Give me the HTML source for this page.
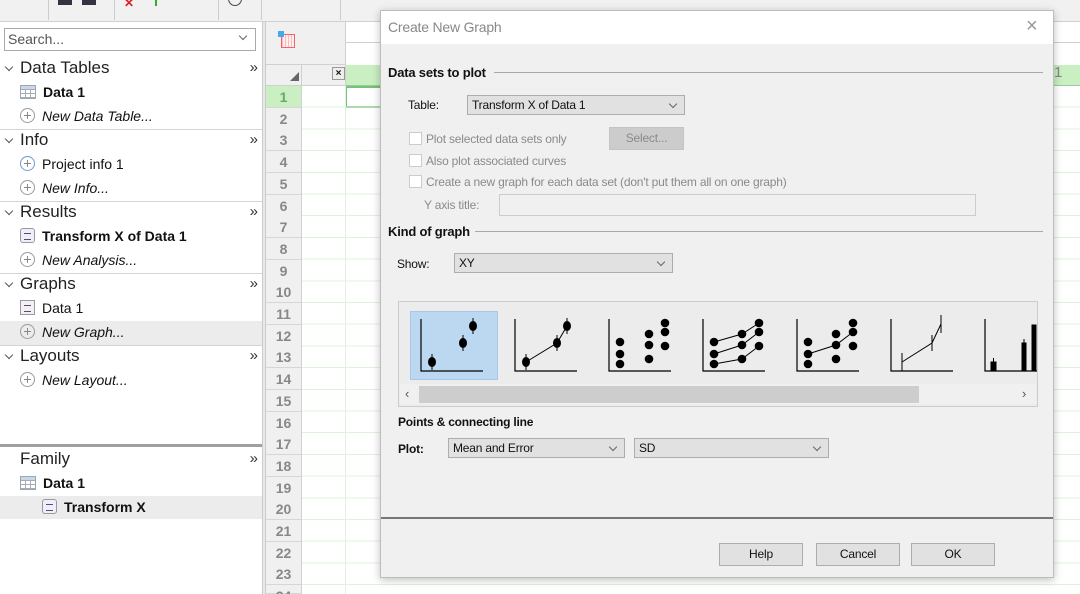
<!DOCTYPE html>
<html><head><meta charset="utf-8"><style>
*{margin:0;padding:0;box-sizing:border-box}
html,body{width:1080px;height:594px;overflow:hidden}
body{position:relative;background:#fff;font-family:"Liberation Sans",sans-serif;color:#111}
.a{position:absolute}
.sec{position:absolute;left:0;width:262px;font-size:17px;color:#222;height:22px}
.sec .ch{position:absolute;left:6px;top:5px;width:6px;height:6px;border-right:1.3px solid #555;border-bottom:1.3px solid #555;transform:rotate(45deg)}
.sec .t{position:absolute;left:20px;top:-1px}
.sec .r{position:absolute;right:4px;top:0;font-size:15px;color:#333}
.it{position:absolute;left:20px;font-size:14px;white-space:nowrap}
.plus{display:inline-block;width:15px;height:15px;border:1px solid #999;border-radius:50%;position:relative;vertical-align:-2px;margin-right:7px}
.plus:before{content:"";position:absolute;left:3px;top:6px;width:7px;height:1px;background:#888}
.plus:after{content:"";position:absolute;left:6px;top:3px;width:1px;height:7px;background:#888}
.tbl{display:inline-block;width:16px;height:14px;border:1px solid #9aa;vertical-align:-2px;margin-right:7px;background:linear-gradient(#c9d7e8 0 3px,transparent 3px),repeating-linear-gradient(90deg,transparent 0 4px,#aab 4px 5px),repeating-linear-gradient(transparent 0 3px,#aab 3px 4px)}
.res{display:inline-block;width:15px;height:15px;border:1px solid #999;border-radius:3px;background:#eef;vertical-align:-2px;margin-right:7px;position:relative}
.res:before{content:"";position:absolute;left:3px;top:4px;width:7px;height:5px;border-top:1px solid #555;border-bottom:1px solid #555}
.hl{position:absolute;left:0;width:262px;background:#ececec}
.sep{position:absolute;left:0;width:262px;height:1px;background:#d4d4d4}
.rn{position:absolute;left:266px;width:36px;height:22px;text-align:center;font-size:14px;font-weight:bold;color:#888;background:#f0f0f0;border-bottom:1px solid #d6d6d6;border-right:1px solid #d0d0d0;line-height:22px}
.dlg{position:absolute;left:380px;top:10px;width:674px;height:568px;background:#f0f0f0;border:1px solid #bdbdbd;box-shadow:0 2px 8px rgba(0,0,0,.25);font-size:12px;letter-spacing:-.2px}
.dlg .a{white-space:nowrap}
.sel{position:absolute;background:#e1e1e1;border:1px solid #adadad;height:20px;padding:2px 4px;font-size:12px}
.sel:after{content:"";position:absolute;right:8px;top:5px;width:5px;height:5px;border-right:1px solid #666;border-bottom:1px solid #666;transform:rotate(45deg)}
.cb{position:absolute;width:13px;height:13px;background:#fff;border:1px solid #ccc}
.gray{color:#8a8a8a}
.btn{position:absolute;top:532px;width:84px;height:23px;background:#e1e1e1;border:1px solid #adadad;text-align:center;line-height:21px}
.h{font-weight:bold}
.line{position:absolute;height:1px;background:#a8a8a8}
</style></head><body>

<div class="a" style="left:0;top:0;width:1080px;height:22px;background:#f1f1f1;border-bottom:1px solid #d0d0d0"></div>
<div class="a" style="left:58px;top:0;width:14px;height:5px;background:#334"></div>
<div class="a" style="left:82px;top:0;width:14px;height:5px;background:#334"></div>
<div class="a" style="left:124px;top:0;color:#d22;font-weight:bold;font-size:12px;line-height:6px">✕</div>
<div class="a" style="left:155px;top:0;width:2px;height:6px;background:#3a3"></div>
<div class="a" style="left:48px;top:0;width:1px;height:20px;background:#ccc"></div>
<div class="a" style="left:114px;top:0;width:1px;height:20px;background:#ccc"></div>
<div class="a" style="left:218px;top:0;width:1px;height:20px;background:#ccc"></div>
<div class="a" style="left:261px;top:0;width:1px;height:20px;background:#ccc"></div>
<div class="a" style="left:228px;top:-8px;width:14px;height:14px;border:1.5px solid #444;border-radius:50%"></div>
<div class="a" style="left:340px;top:0;width:1px;height:20px;background:#ccc"></div>

<div class="a" style="left:0;top:22px;width:262px;height:572px;background:#fff"></div>
<div class="a" style="left:4px;top:28px;width:252px;height:23px;border:1px solid #aaa;background:#fff;font-size:14px;color:#555;padding:2px 3px">Search...</div>
<div class="a" style="left:240px;top:33px;width:6px;height:6px;border-right:1px solid #666;border-bottom:1px solid #666;transform:rotate(45deg)"></div>

<div class="hl" style="top:321px;height:24px"></div>
<div class="hl" style="top:496px;height:23px"></div>

<div class="sec" style="top:59px"><span class="ch"></span><span class="t">Data Tables</span><span class="r">»</span></div>
<div class="it" style="top:84px"><span class="tbl"></span><b>Data 1</b></div>
<div class="it" style="top:108px"><span class="plus"></span><i>New Data Table...</i></div>
<div class="sep" style="top:129px"></div>
<div class="sec" style="top:131px"><span class="ch"></span><span class="t">Info</span><span class="r">»</span></div>
<div class="it" style="top:156px"><span class="plus" style="border-color:#6a9ad4"></span>Project info 1</div>
<div class="it" style="top:180px"><span class="plus"></span><i>New Info...</i></div>
<div class="sep" style="top:201px"></div>
<div class="sec" style="top:203px"><span class="ch"></span><span class="t">Results</span><span class="r">»</span></div>
<div class="it" style="top:228px"><span class="res"></span><b>Transform X of Data 1</b></div>
<div class="it" style="top:252px"><span class="plus"></span><i>New Analysis...</i></div>
<div class="sep" style="top:273px"></div>
<div class="sec" style="top:275px"><span class="ch"></span><span class="t">Graphs</span><span class="r">»</span></div>
<div class="it" style="top:300px"><span class="res" style="background:#f4eefa;border-radius:0"></span>Data 1</div>
<div class="it" style="top:324px"><span class="plus"></span><i>New Graph...</i></div>
<div class="sep" style="top:345px"></div>
<div class="sec" style="top:347px"><span class="ch"></span><span class="t">Layouts</span><span class="r">»</span></div>
<div class="it" style="top:372px"><span class="plus"></span><i>New Layout...</i></div>

<div class="a" style="left:0;top:444px;width:262px;height:3px;background:#a0a0a0"></div>
<div class="sec" style="top:450px"><span class="t">Family</span><span class="r">»</span></div>
<div class="it" style="top:475px"><span class="tbl"></span><b>Data 1</b></div>
<div class="it" style="top:499px;left:42px"><span class="res"></span><b>Transform X</b></div>

<div class="a" style="left:262px;top:22px;width:4px;height:572px;background:#e8e8e8;border-left:1px solid #ccc;border-right:1px solid #ccc"></div>

<div class="a" style="left:266px;top:22px;width:80px;height:43px;background:#f0f0f0;border-right:1px solid #d0d0d0;border-bottom:1px solid #d0d0d0"></div>
<div class="a" style="left:281px;top:34px;width:14px;height:14px;border:1px solid #e66;background:repeating-linear-gradient(90deg,#fbb 0 1px,#fee 1px 3px)"></div>
<div class="a" style="left:278px;top:31px;width:6px;height:6px;background:#4ae"></div>
<div class="a" style="left:346px;top:42px;width:734px;height:1px;background:#d0d0d0"></div>
<div class="a" style="left:266px;top:65px;width:36px;height:21px;background:#f0f0f0;border-right:1px solid #d0d0d0;border-bottom:1px solid #d0d0d0"></div>
<div class="a" style="left:290px;top:72px;width:0;height:0;border-left:9px solid transparent;border-bottom:9px solid #666"></div>
<div class="a" style="left:302px;top:65px;width:44px;height:21px;background:#f0f0f0;border-right:1px solid #d0d0d0;border-bottom:1px solid #d0d0d0"></div>
<div class="a" style="left:332px;top:67px;width:13px;height:13px;border:1px solid #999;background:#eee;font-size:10px;font-weight:bold;text-align:center;line-height:11px">×</div>
<div class="a" style="left:346px;top:65px;width:734px;height:21px;background:#c9efc2;border-bottom:1px solid #9c9"></div>
<div class="a" style="left:1054px;top:64px;font-size:15px;color:#888">1</div>
<div class="a" style="left:345px;top:86px;width:40px;height:22px;border:2px solid #79c079"></div>
<div class="a" style="left:302px;top:86px;width:778px;height:508px;background:repeating-linear-gradient(transparent 0 20.7px,#dff3dc 20.7px 21.7px),linear-gradient(90deg,transparent 0 43px,#dff3dc 43px 44px,transparent 44px)"></div>
<div class="rn" style="top:86px;background:#c9efc2;color:#6a6">1</div>
<div class="rn" style="top:107.7px">2</div><div class="rn" style="top:129.4px">3</div><div class="rn" style="top:151.1px">4</div><div class="rn" style="top:172.8px">5</div><div class="rn" style="top:194.5px">6</div><div class="rn" style="top:216.2px">7</div><div class="rn" style="top:237.9px">8</div><div class="rn" style="top:259.6px">9</div><div class="rn" style="top:281.3px">10</div><div class="rn" style="top:303px">11</div><div class="rn" style="top:324.7px">12</div><div class="rn" style="top:346.4px">13</div><div class="rn" style="top:368.1px">14</div><div class="rn" style="top:389.8px">15</div><div class="rn" style="top:411.5px">16</div><div class="rn" style="top:433.2px">17</div><div class="rn" style="top:454.9px">18</div><div class="rn" style="top:476.6px">19</div><div class="rn" style="top:498.3px">20</div><div class="rn" style="top:520px">21</div><div class="rn" style="top:541.7px">22</div><div class="rn" style="top:563.4px">23</div><div class="rn" style="top:585.1px;height:9px">24</div>

<div class="dlg">
 <div class="a" style="left:0;top:0;width:672px;height:33px;background:#fff"></div>
 <div class="a" style="left:7px;top:8px;font-size:14px;color:#888">Create New Graph</div>
 <div class="a" style="left:645px;top:4px;font-size:20px;color:#999;font-weight:lighter">×</div>

 <div class="a h" style="left:7px;top:54px;font-size:13px">Data sets to plot</div>
 <div class="line" style="left:113px;top:61px;width:549px"></div>
 <div class="a" style="left:27px;top:87px">Table:</div>
 <div class="sel" style="left:86px;top:84px;width:218px">Transform X of Data 1</div>
 <div class="cb" style="left:28px;top:121px"></div><div class="a gray" style="left:45px;top:121px">Plot selected data sets only</div>
 <div class="a" style="left:228px;top:116px;width:75px;height:23px;background:#ccc;border:1px solid #c4c4c4;text-align:center;line-height:21px;color:#8a8a8a">Select...</div>
 <div class="cb" style="left:28px;top:143px"></div><div class="a gray" style="left:45px;top:143px">Also plot associated curves</div>
 <div class="cb" style="left:28px;top:164px"></div><div class="a gray" style="left:45px;top:164px">Create a new graph for each data set (don't put them all on one graph)</div>
 <div class="a gray" style="left:43px;top:187px">Y axis title:</div>
 <div class="a" style="left:118px;top:183px;width:477px;height:22px;border:1px solid #ccc;background:#f0f0f0"></div>

 <div class="a h" style="left:7px;top:213px;font-size:13px">Kind of graph</div>
 <div class="line" style="left:94px;top:220px;width:568px"></div>
 <div class="a" style="left:16px;top:246px">Show:</div>
 <div class="sel" style="left:73px;top:242px;width:219px">XY</div>

 <div class="a" style="left:17px;top:290px;width:640px;height:106px;border:1px solid #ccc;background:#ececec;overflow:hidden">
  <div class="a" style="left:11px;top:9px;width:88px;height:69px;background:#bcd8f0;border:1px solid #a5c8ea"></div>
  <svg class="a" style="left:0;top:0" width="640" height="90" viewBox="0 0 640 90">
   <g stroke="#000" fill="none" stroke-width="1.2">
    <path d="M22 17V69H84M116 17V69H178M210 17V69H272M304 17V69H366M398 17V69H460M492 17V69H554M586 17V69H648"/>
   </g>
   <g fill="#000" stroke="#000" stroke-width="1">
    <g transform="translate(11,9)"><path d="M22 43V59M53 24V40M63 7V23"/><ellipse cx="22" cy="51" rx="3.5" ry="4.5"/><ellipse cx="53" cy="32" rx="3.5" ry="4.5"/><ellipse cx="63" cy="15" rx="3.5" ry="4.5"/></g>
    <g transform="translate(105,9)"><path d="M22 43V59M53 24V40M63 7V23M22 51L53 32L63 15" fill="none"/><ellipse cx="22" cy="51" rx="3.5" ry="4.5"/><ellipse cx="53" cy="32" rx="3.5" ry="4.5"/><ellipse cx="63" cy="15" rx="3.5" ry="4.5"/></g>
    <g transform="translate(199,9)"><circle cx="22" cy="31" r="3.8"/><circle cx="22" cy="43" r="3.8"/><circle cx="22" cy="53" r="3.8"/><circle cx="51" cy="23" r="3.8"/><circle cx="51" cy="34" r="3.8"/><circle cx="51" cy="48" r="3.8"/><circle cx="67" cy="12" r="3.8"/><circle cx="67" cy="21" r="3.8"/><circle cx="67" cy="35" r="3.8"/></g>
    <g transform="translate(293,9)"><path d="M22 31L50 23L67 12M22 43L50 34L67 21M22 53L50 48L67 35" fill="none"/><circle cx="22" cy="31" r="3.8"/><circle cx="22" cy="43" r="3.8"/><circle cx="22" cy="53" r="3.8"/><circle cx="50" cy="23" r="3.8"/><circle cx="50" cy="34" r="3.8"/><circle cx="50" cy="48" r="3.8"/><circle cx="67" cy="12" r="3.8"/><circle cx="67" cy="21" r="3.8"/><circle cx="67" cy="35" r="3.8"/></g>
    <g transform="translate(387,9)"><path d="M22 43L50 34L67 21" fill="none"/><circle cx="22" cy="31" r="3.8"/><circle cx="22" cy="43" r="3.8"/><circle cx="22" cy="53" r="3.8"/><circle cx="50" cy="23" r="3.8"/><circle cx="50" cy="34" r="3.8"/><circle cx="50" cy="48" r="3.8"/><circle cx="67" cy="12" r="3.8"/><circle cx="67" cy="21" r="3.8"/><circle cx="67" cy="35" r="3.8"/></g>
    <g transform="translate(481,9)" fill="none"><path d="M22 51L52 32L61 13M22 42V60M52 24V40M61 4V22"/></g>
    <g transform="translate(575,9)"><rect x="17" y="51" width="5" height="9"/><path d="M19.5 47V51"/><rect x="48" y="32" width="4" height="28"/><path d="M50 28V32"/><rect x="58" y="14" width="4" height="46"/></g>
   </g>
  </svg>
  <div class="a" style="left:1px;top:82px;width:636px;height:20px;background:#f0f0f0"></div>
  <div class="a" style="left:20px;top:84px;width:500px;height:17px;background:#cdcdcd"></div>
  <div class="a" style="left:6px;top:84px;font-size:13px;color:#555">‹</div>
  <div class="a" style="left:623px;top:84px;font-size:13px;color:#555">›</div>
 </div>

 <div class="a h" style="left:17px;top:404px">Points &amp; connecting line</div>
 <div class="a h" style="left:17px;top:431px">Plot:</div>
 <div class="sel" style="left:67px;top:427px;width:177px">Mean and Error</div>
 <div class="sel" style="left:253px;top:427px;width:195px">SD</div>

 <div class="a" style="left:0;top:506px;width:672px;height:2px;background:#777"></div>
 <div class="btn" style="left:338px">Help</div>
 <div class="btn" style="left:435px">Cancel</div>
 <div class="btn" style="left:530px">OK</div>
</div>
</body></html>
